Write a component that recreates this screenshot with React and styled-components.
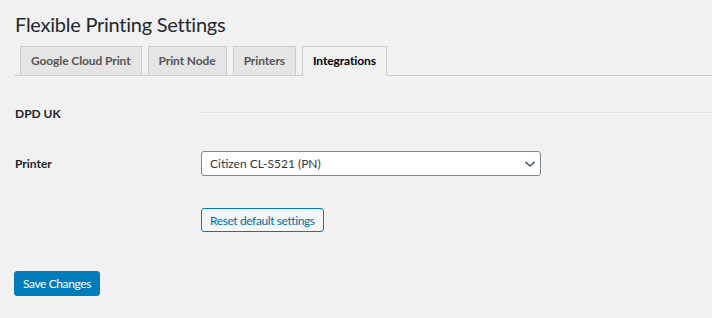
import React from 'react'
import styled, { createGlobalStyle } from 'styled-components'

const GlobalStyle = createGlobalStyle`
  html, body {
    margin: 0;
    background: #f1f1f1;
    font-family: Lato, "Liberation Sans", sans-serif;
    color: #23282d;
  }
`

const tabs = ['Google Cloud Print', 'Print Node', 'Printers', 'Integrations']

export default function App() {
  return (
    <>
      <GlobalStyle />
      <Wrap>
        <Title>Flexible Printing Settings</Title>
        <TabBar>
          {tabs.map((t) => (
            <Tab key={t} $active={t === 'Integrations'}>{t}</Tab>
          ))}
        </TabBar>
        <Form>
          <Row $top={25} $height={24}>
            <Label>DPD UK</Label>
            <Field>
              <Divider />
            </Field>
          </Row>
          <Row $top={26} $height={25}>
            <Label>Printer</Label>
            <Field>
              <SelectBox>
                <span>Citizen CL-S521 (PN)</span>
                <svg width="12" height="8" viewBox="0 0 12 8">
                  <path d="M1.5 1.8 L6 6 L10.5 1.8" fill="none" stroke="#555d66" strokeWidth="1.6" />
                </svg>
              </SelectBox>
            </Field>
          </Row>
          <Row $top={32} $height={24}>
            <Label />
            <Field>
              <SecondaryButton type="button">Reset default settings</SecondaryButton>
            </Field>
          </Row>
          <Submit>
            <PrimaryButton type="button">Save Changes</PrimaryButton>
          </Submit>
        </Form>
      </Wrap>
    </>
  )
}

const Wrap = styled.div`
  padding-left: 14px;
`

const Title = styled.h1`
  margin: 0;
  padding: 10px 0 0 1px;
  font-size: 20px;
  font-weight: 400;
  letter-spacing: -0.25px;
  line-height: 28px;
  color: #23282d;
`

const TabBar = styled.nav`
  display: flex;
  margin-top: 8px;
  border-bottom: 1px solid #ccc;
  height: 29px;
`

const Tab = styled.a`
  box-sizing: border-box;
  height: 30px;
  margin-left: 6px;
  padding: 0 10px;
  border: 1px solid #ccc;
  border-bottom-color: ${(p) => (p.$active ? '#f1f1f1' : '#ccc')};
  background: ${(p) => (p.$active ? '#f1f1f1' : '#e5e5e5')};
  color: ${(p) => (p.$active ? '#000' : '#555')};
  font-size: 12px;
  font-weight: 700;
  letter-spacing: -0.1px;
  line-height: 28px;
  white-space: nowrap;
  cursor: pointer;
`

const Form = styled.form`
  display: flex;
  flex-direction: column;
`

const Row = styled.div`
  display: grid;
  grid-template-columns: 187px 1fr;
  align-items: center;
  margin-top: ${(p) => p.$top}px;
  height: ${(p) => p.$height}px;
`

const Label = styled.div`
  padding-left: 1px;
  font-size: 12px;
  font-weight: 700;
  color: #23282d;
`

const Field = styled.div`
  display: flex;
  align-items: center;
  height: 100%;
`

const Divider = styled.div`
  flex: 1;
  height: 0;
  margin-top: -1px;
  border-top: 1px solid #dedede;
  border-bottom: 1px solid #fafafa;
`

const SelectBox = styled.div`
  box-sizing: border-box;
  width: 340px;
  height: 25px;
  display: flex;
  align-items: center;
  justify-content: space-between;
  padding: 0 4px 0 8px;
  background: #fff;
  border: 1px solid #7e8993;
  border-radius: 3px;
  font-size: 12px;
  color: #32373c;
`

const SecondaryButton = styled.button`
  box-sizing: border-box;
  height: 24px;
  padding: 0 8px;
  background: #f3f5f6;
  border: 1px solid #007cba;
  border-radius: 3px;
  color: #0071a1;
  font-family: inherit;
  font-size: 12px;
  letter-spacing: -0.4px;
  cursor: pointer;
`

const Submit = styled.div`
  margin-top: 39px;
`

const PrimaryButton = styled.button`
  box-sizing: border-box;
  height: 25px;
  padding: 0 8px;
  background: #007cba;
  border: 1px solid #007cba;
  border-radius: 3px;
  color: #fff;
  font-family: inherit;
  font-size: 12px;
  letter-spacing: -0.4px;
  cursor: pointer;
`
